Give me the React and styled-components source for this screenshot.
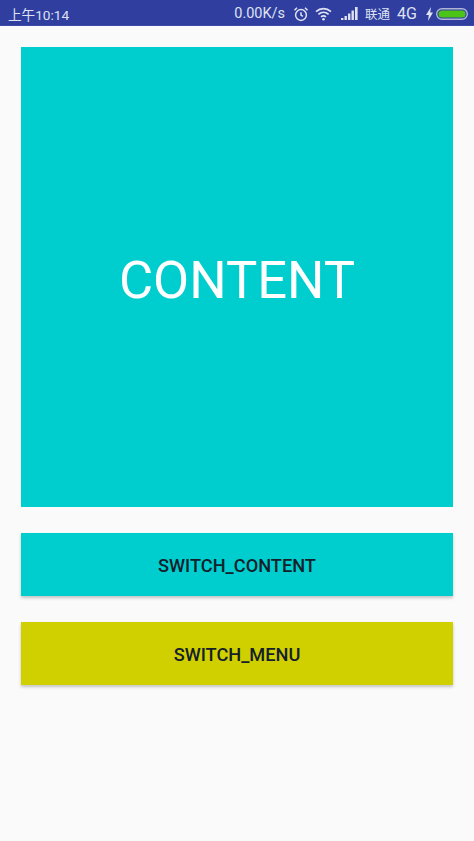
import React from "react";
import styled, { createGlobalStyle } from "styled-components";

const GlobalStyle = createGlobalStyle`
  html, body {
    margin: 0;
    padding: 0;
    background: #fafafa;
  }
`;

const Screen = styled.div`
  width: 474px;
  height: 841px;
  display: flex;
  flex-direction: column;
  overflow: hidden;
  background: #fafafa;
  font-family: Roboto, "Noto Sans CJK SC", sans-serif;
`;

const StatusBar = styled.div`
  height: 26px;
  flex-shrink: 0;
  display: flex;
  align-items: center;
  justify-content: space-between;
  padding: 2px 6px 0 8px;
  box-sizing: border-box;
  background: #303f9f;
  border-bottom: 1px solid #3a4aa6;
  color: #dfe2f2;
`;

const StatusGroup = styled.div`
  display: flex;
  align-items: center;
`;

const StatusText = styled.span`
  margin-right: ${({ $gap }) => $gap || 0}px;
  font-size: ${({ $size }) => $size || 14}px;
  white-space: nowrap;
`;

const StatusIcon = styled.svg`
  display: block;
  margin-right: ${({ $gap }) => $gap || 0}px;
`;

const Main = styled.div`
  flex: 1;
  display: flex;
  flex-direction: column;
  padding: 21px 21px 0;
`;

const ContentBox = styled.div`
  height: 460px;
  box-sizing: border-box;
  padding-top: 6px;
  display: flex;
  align-items: center;
  justify-content: center;
  background: #00cdce;
  color: #fff;
  font-size: 52.5px;
  margin-bottom: 26px;
`;

const SwitchButton = styled.div`
  height: 63px;
  box-sizing: border-box;
  padding-top: 2px;
  display: flex;
  align-items: center;
  justify-content: center;
  margin-bottom: 26px;
  background: ${({ $color }) => $color};
  color: #14202a;
  font-size: 18.2px;
  font-weight: 500;
  box-shadow: 0 2px 3px rgba(0, 0, 0, 0.22);
`;

const AlarmIcon = () => (
  <StatusIcon width="16" height="16" viewBox="0 0 16 16" fill="none" stroke="#dfe2f2" strokeWidth="1.5" $gap={6}>
    <circle cx="8" cy="9" r="5.4" />
    <path d="M8 6.200v3l1.900 1.200M1.500 4.300 4 1.800M14.500 4.300 12 1.800" />
  </StatusIcon>
);

const WifiIcon = () => (
  <StatusIcon width="17" height="14" viewBox="0 0 17 14" fill="none" stroke="#dfe2f2" strokeWidth="1.700" $gap={9}>
    <path d="M1 4.600C5.500.7 11.500.7 16 4.600M3.400 7.300c3-2.600 7.200-2.600 10.200 0M6 9.900c1.500-1.200 3.500-1.200 5 0" />
    <circle cx="8.500" cy="12.300" r="1.300" fill="#dfe2f2" stroke="none" />
  </StatusIcon>
);

const SignalIcon = () => (
  <StatusIcon width="17" height="13" viewBox="0 0 17 13" fill="#dfe2f2" $gap={7}>
    <rect x="0" y="11" width="2.400" height="2" />
    <rect x="3.500" y="9" width="2.400" height="4" />
    <rect x="7" y="6.500" width="2.400" height="6.500" />
    <rect x="10.500" y="3.500" width="2.400" height="9.500" />
    <rect x="14" y="0" width="2.600" height="13" />
  </StatusIcon>
);

const BoltIcon = () => (
  <StatusIcon width="7" height="14" viewBox="0 0 7 14" fill="#dfe2f2" $gap={3}>
    <path d="M5 0 0 8h2.800L2 14l5-8.400H4.200z" />
  </StatusIcon>
);

const BatteryIcon = () => (
  <StatusIcon width="32" height="12" viewBox="0 0 32 12">
    <rect x="0.700" y="0.700" width="30.600" height="10.600" rx="5.300" fill="none" stroke="#aeb5d4" strokeWidth="1.400" />
    <rect x="2.500" y="2.500" width="27" height="7" rx="3.500" fill="#4cc417" />
  </StatusIcon>
);

export default function App() {
  return (
    <>
      <GlobalStyle />
      <Screen>
        <StatusBar>
          <StatusText $size={13.6}>上午10:14</StatusText>
          <StatusGroup>
            <StatusText $size={14.5} $gap={8}>0.00K/s</StatusText>
            <AlarmIcon />
            <WifiIcon />
            <SignalIcon />
            <StatusText $size={12.5} $gap={7}>联通</StatusText>
            <StatusText $size={16} $gap={9}>4G</StatusText>
            <BoltIcon />
            <BatteryIcon />
          </StatusGroup>
        </StatusBar>
        <Main>
          <ContentBox>CONTENT</ContentBox>
          <SwitchButton $color="#00cdce">SWITCH_CONTENT</SwitchButton>
          <SwitchButton $color="#d0cf00">SWITCH_MENU</SwitchButton>
        </Main>
      </Screen>
    </>
  );
}
